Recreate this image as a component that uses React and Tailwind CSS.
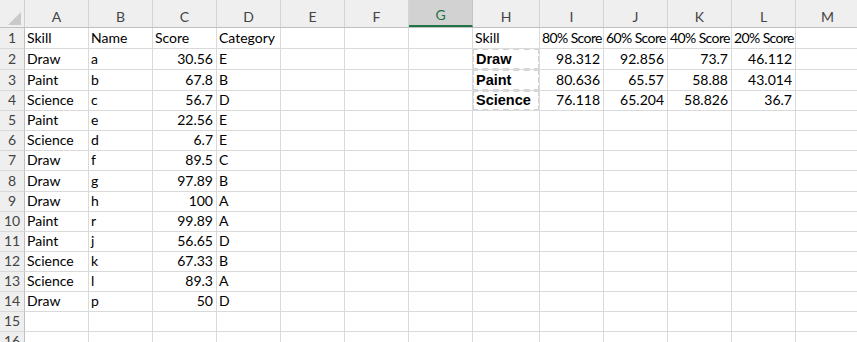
import React from 'react';

const cols = [
    { k: 'A', w: 'w-[64px]' },
    { k: 'B', w: 'w-[64px]' },
    { k: 'C', w: 'w-[64px]' },
    { k: 'D', w: 'w-[64px]' },
    { k: 'E', w: 'w-[64px]' },
    { k: 'F', w: 'w-[64px]' },
    { k: 'G', w: 'w-[64px]' },
    { k: 'H', w: 'w-[67px]' },
    { k: 'I', w: 'w-[64px]' },
    { k: 'J', w: 'w-[64px]' },
    { k: 'K', w: 'w-[64px]' },
    { k: 'L', w: 'w-[64px]' },
    { k: 'M', w: 'w-[64px]' },
];

const heights = [
    'h-[21px]', 'h-[21px]', 'h-[21px]', 'h-[20px]', 'h-[20px]', 'h-[20px]', 'h-[20px]', 'h-[21px]',
    'h-[20px]', 'h-[20px]', 'h-[20px]', 'h-[20px]', 'h-[20px]', 'h-[20px]', 'h-[20px]', 'h-[20px]',
];

// A, B, C, D ... H, I, J, K, L
const data = [
    ['Skill', 'Name', 'Score', 'Category', '', '', '', 'Skill', '80% Score', '60% Score', '40% Score', '20% Score'],
    ['Draw', 'a', 30.56, 'E', '', '', '', 'Draw', 98.312, 92.856, 73.7, 46.112],
    ['Paint', 'b', 67.8, 'B', '', '', '', 'Paint', 80.636, 65.57, 58.88, 43.014],
    ['Science', 'c', 56.7, 'D', '', '', '', 'Science', 76.118, 65.204, 58.826, 36.7],
    ['Paint', 'e', 22.56, 'E'],
    ['Science', 'd', 6.7, 'E'],
    ['Draw', 'f', 89.5, 'C'],
    ['Draw', 'g', 97.89, 'B'],
    ['Draw', 'h', 100, 'A'],
    ['Paint', 'r', 99.89, 'A'],
    ['Paint', 'j', 56.65, 'D'],
    ['Science', 'k', 67.33, 'B'],
    ['Science', 'l', 89.3, 'A'],
    ['Draw', 'p', 50, 'D'],
    [],
    [],
];

function Cell({ col, value, row, ci }) {
    const isNum = typeof value === 'number';
    const marquee = ci === 7 && row >= 1 && row <= 3;
    const tight = row === 0 && ci >= 8;
    return (
        <div className={`${col.w} relative h-full shrink-0 border-r border-b border-[#dadada] flex items-end pb-[1px] ${isNum ? 'justify-end pr-[3px]' : 'pl-[2px]'} ${ci === 3 ? 'overflow-visible' : 'overflow-hidden'}`}>
            {marquee && (
                <span className="pointer-events-none absolute -left-px -top-px -right-px -bottom-px border-2 border-dashed border-[#d4d4d4]" />
            )}
            <span className={`relative whitespace-nowrap leading-[18px] ${marquee ? "font-['Liberation_Sans',Arial,sans-serif] font-bold text-[14.5px] pl-[1px]" : "font-['Lato',sans-serif] text-[14px]"} ${tight ? 'tracking-[-0.6px]' : ''}`}>
                {value === undefined ? '' : String(value)}
            </span>
        </div>
    );
}

export default function App() {
    return (
        <div className="w-[857px] h-[342px] overflow-hidden bg-white text-black select-none">
            {/* column headers */}
            <div className="flex h-[28px] bg-[#efefef] border-b border-[#bfbfbf]">
                <div className="w-[25px] shrink-0 h-full border-r border-[#cfcfcf] flex items-end justify-end pr-[2px] pb-[1px]">
                    <svg width="14" height="14" viewBox="0 0 14 14">
                        <polygon points="13,0 13,13 0,13" fill="#c9c9c9" />
                    </svg>
                </div>
                {cols.map((c) =>
                    c.k === 'G' ? (
                        <div key={c.k} className={`${c.w} shrink-0 h-full bg-[#d2d2d2] border-r border-[#c4c4c4] border-b-2 border-b-[#217346] flex items-center justify-center pt-[4px] font-['Lato',sans-serif] text-[14px] text-[#217346]`}>
                            {c.k}
                        </div>
                    ) : (
                        <div key={c.k} className={`${c.w} shrink-0 h-full border-r border-[#d4d4d4] flex items-center justify-center pt-[5px] font-['Lato',sans-serif] text-[14px] text-[#444444]`}>
                            {c.k}
                        </div>
                    )
                )}
            </div>

            {data.map((row, ri) => (
                <div key={ri} className={`flex ${heights[ri]}`}>
                    <div className="w-[25px] shrink-0 h-full bg-[#efefef] border-r border-[#bfbfbf] border-b border-b-[#d9d9d9] flex items-end justify-center pb-[1px] font-['Lato',sans-serif] text-[14px] leading-[18px] text-[#444444]">
                        {ri + 1}
                    </div>
                    {cols.map((c, ci) => (
                        <Cell key={c.k} col={c} value={row[ci] === '' ? undefined : row[ci]} row={ri} ci={ci} />
                    ))}
                </div>
            ))}
        </div>
    );
}
